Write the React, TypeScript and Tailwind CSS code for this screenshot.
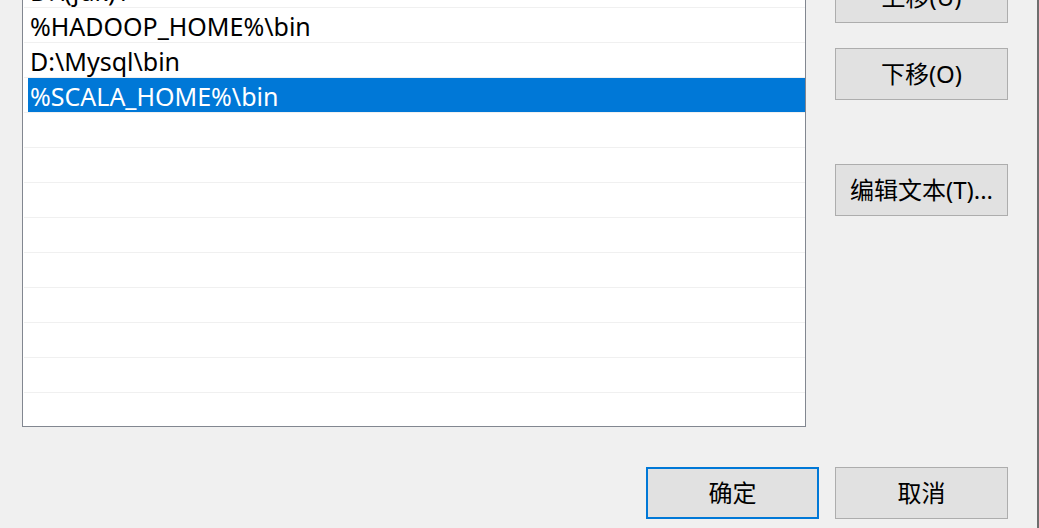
import type { ReactNode } from 'react'

const FONT = "font-['Noto_Sans','Noto_Sans_CJK_SC',sans-serif]"

const paths = [
  'D:\\(jdk)\\',
  '%HADOOP_HOME%\\bin',
  'D:\\Mysql\\bin',
  '%SCALA_HOME%\\bin',
  '',
  '',
  '',
  '',
  '',
  '',
  '',
  '',
  '',
]

const SELECTED = 3

function DialogButton({ children, focused = false, className = '' }: { children: ReactNode; focused?: boolean; className?: string }) {
  return (
    <button
      type="button"
      className={`flex h-[52px] w-[173px] items-center justify-center bg-[#e1e1e1] text-[24px] text-black ${
        focused ? 'border-2 border-[#0078d7]' : 'border border-[#adadad]'
      } ${className}`}
    >
      {children}
    </button>
  )
}

export default function App() {
  return (
    <div className={`${FONT} h-[528px] w-[1039px] overflow-hidden border-r-2 border-[#6e6e6e] bg-[#f0f0f0]`}>
      <div className="flex items-start">
        <div className="ml-[22px] mt-[-28px] h-[455px] w-[784px] overflow-hidden border border-[#828790] bg-white pl-[1px]">
          {paths.map((p, i) => (
            <div key={i} className="h-[35px] border-b border-[#f0f0f0]">
              <div
                className={`ml-[4px] flex h-[34px] items-center pl-[2px] pt-[2px] text-[25px] leading-none ${
                  i === SELECTED ? 'bg-[#0078d7] text-white' : 'text-black'
                }`}
              >
                {p}
              </div>
            </div>
          ))}
        </div>
        <div className="ml-[29px] mt-[-29px] flex flex-col">
          <DialogButton>上移(U)</DialogButton>
          <DialogButton className="mt-[25px]">下移(O)</DialogButton>
          <DialogButton className="mt-[64px]">编辑文本(T)...</DialogButton>
        </div>
      </div>
      <div className="mt-[40px] flex justify-end gap-[16px] pr-[29px]">
        <DialogButton focused>确定</DialogButton>
        <DialogButton>取消</DialogButton>
      </div>
    </div>
  )
}
